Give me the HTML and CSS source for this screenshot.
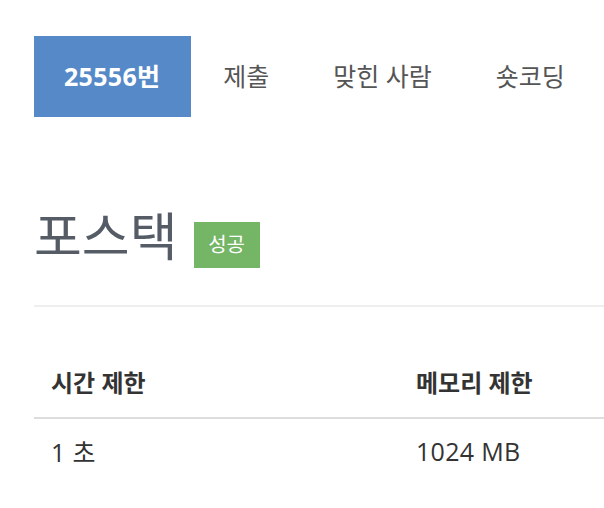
FILE: index.html
```html
<!DOCTYPE html>
<html lang="ko">
<head>
<meta charset="utf-8">
<link rel="stylesheet" href="styles.css">
</head>
<body>
<div class="page">
  <ul class="tabs">
    <li class="tab active"><a>25556번</a></li>
    <li class="tab"><a>제출</a></li>
    <li class="tab"><a>맞힌 사람</a></li>
    <li class="tab"><a>숏코딩</a></li>
  </ul>
  <div class="title-row">
    <h1 class="title">포스택</h1>
    <span class="badge">성공</span>
  </div>
  <hr class="divider">
  <table class="info">
    <thead>
      <tr><th>시간 제한</th><th>메모리 제한</th></tr>
    </thead>
    <tbody>
      <tr><td>1 초</td><td>1024 MB</td></tr>
    </tbody>
  </table>
</div>
</body>
</html>
```
FILE: styles.css
```css
html, body {
  margin: 0;
  padding: 0;
  overflow: hidden;
  background: #fff;
}
body {
  font-family: "Open Sans", "Noto Sans CJK KR", sans-serif;
  color: #333;
}
.page {
  padding: 36px 0 0 34px;
  width: 1500px;
}
.tabs {
  list-style: none;
  margin: 0;
  padding: 0;
  display: flex;
  height: 81px;
}
.tab a {
  display: block;
  padding: 0 32px;
  line-height: 81px;
  font-size: 25px;
  color: #555;
}
.tab.active a {
  padding: 0 31px 0 30px;
  background: #5589c7;
  color: #fff;
  font-weight: bold;
  letter-spacing: 0.3px;
}
.title-row {
  display: flex;
  align-items: flex-end;
  margin-top: 87px;
  gap: 16px;
}
.title {
  margin: 0;
  font-size: 52px;
  font-weight: 400;
  line-height: 64px;
  color: #555c66;
}
.badge {
  background: #74b566;
  color: #fff;
  font-size: 20px;
  width: 66px;
  height: 46px;
  line-height: 46px;
  text-align: center;
}
.divider {
  border: 0;
  border-top: 2px solid #eee;
  margin: 37px 0 0 0;
  width: 1400px;
}
.info {
  border-collapse: collapse;
  margin-top: 57px;
  width: 1400px;
  table-layout: fixed;
}
.info th, .info td {
  text-align: left;
  padding: 0 17px;
  font-size: 24px;
}
.info th:first-child {
  width: 331px;
}
.info th {
  font-weight: bold;
  height: 53px;
  vertical-align: top;
  border-bottom: 2px solid #ddd;
}
.info td {
  padding-top: 14px;
  font-size: 25px;
  letter-spacing: 0.3px;
  font-weight: normal;
}
```
